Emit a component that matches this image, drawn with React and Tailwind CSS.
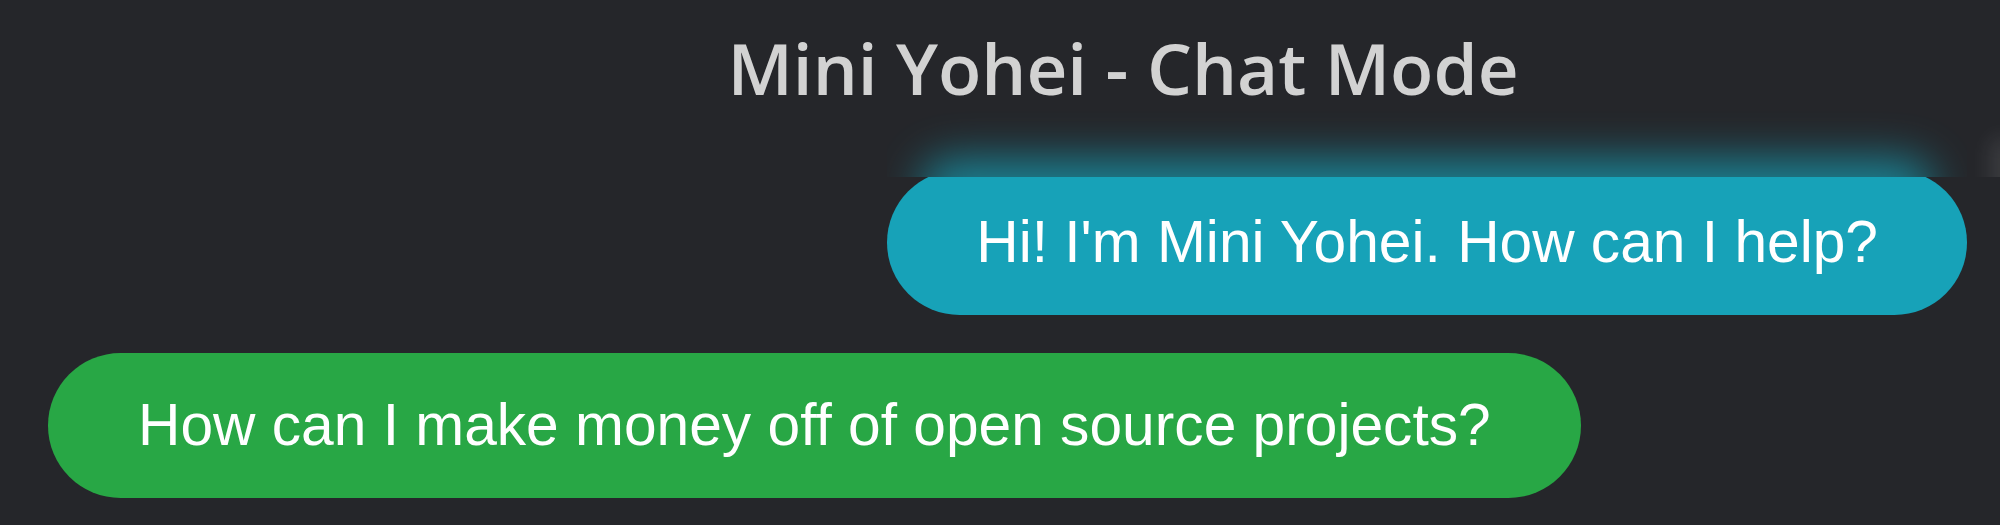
import React from 'react';

const messages = [
  { id: 1, from: 'bot', text: "Hi! I'm Mini Yohei. How can I help?" },
  { id: 2, from: 'user', text: 'How can I make money off of open source projects?' },
];

const Bubble = ({ from, text }) => {
  if (from === 'bot') {
    return (
      <div className="relative self-end mr-[33px]">
        {/* glow that bleeds up into the header */}
        <div className="pointer-events-none absolute bottom-full left-0 right-0 h-[100px] overflow-hidden">
          <div className="absolute left-[34px] right-[34px] top-[82px] h-[60px] rounded-full bg-[#17a2b8] opacity-75 blur-[22px]" />
        </div>
        <div className="overflow-hidden">
          <div className="-mt-[7px] rounded-full bg-[#17a2b8] px-[89px] pt-[38px] pb-[40px] text-[58.7px] leading-[67px] text-white whitespace-nowrap">
            {text}
          </div>
        </div>
      </div>
    );
  }

  return (
    <div className="self-start ml-[48px] rounded-full bg-[#28a745] px-[90px] pt-[38px] pb-[40px] text-[58.7px] leading-[67px] text-white whitespace-nowrap">
      {text}
    </div>
  );
};

const App = () => {
  return (
    <div className="h-[525px] w-full overflow-hidden bg-[#25262a] font-['Liberation_Sans',Arial,sans-serif]">
      <div className="relative h-[177px] overflow-hidden">
        <h1 className="flex justify-center pl-[246px] pt-[32px] font-['Open_Sans',sans-serif] text-[71px] font-semibold leading-[72px] text-[#d2d2d2]">
          Mini Yohei - Chat Mode
        </h1>
        <div className="pointer-events-none absolute -right-[14px] bottom-[-30px] h-[70px] w-[24px] rounded-full bg-white/10 blur-[10px]" />
      </div>

      <div className="flex flex-col gap-[38px]">
        {messages.map((m) => (
          <Bubble key={m.id} from={m.from} text={m.text} />
        ))}
      </div>
    </div>
  );
};

export default App;
